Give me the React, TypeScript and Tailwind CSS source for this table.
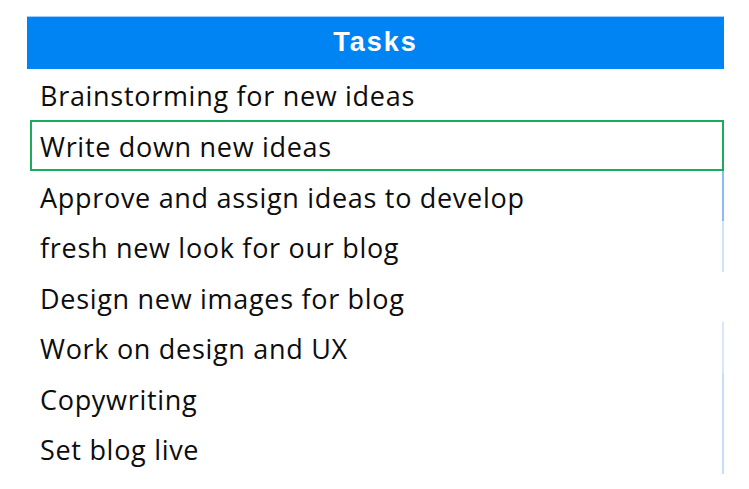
const tasks = [
  "Brainstorming for new ideas",
  "Write down new ideas",
  "Approve and assign ideas to develop",
  "fresh new look for our blog",
  "Design new images for blog",
  "Work on design and UX",
  "Copywriting",
  "Set blog live",
];

// faint table edge visible on the right of some rows
const edges = [
  "border-transparent",
  "border-transparent",
  "border-[#8fb8f5]",
  "border-[#cfe3fb]",
  "border-transparent",
  "border-[#d6e8fc]",
  "border-[#c4defb]",
  "border-[#c4defb]",
];

export default function App() {
  return (
    <div className="w-[749px] h-[489px] bg-white pt-[16px] pl-[27px]">
      <div className="w-[697px]">
        <div className="h-[53px] bg-[#0084f4] border-t border-[#9fcdfb] flex items-center justify-center">
          <span className="text-white font-bold text-[27px] tracking-[2px] font-['Liberation_Sans',Arial,sans-serif] -mt-[2px]">
            Tasks
          </span>
        </div>
        <ul className="pl-[3px] font-['Open_Sans',sans-serif] text-[#0d0d0d]">
          {tasks.map((t, i) =>
            i === 1 ? (
              <li
                key={t}
                className="h-[51px] border-2 border-[#1aab5c] pl-[8px] pt-[4px] flex items-center text-[27px] tracking-[0.7px]"
              >
                {t}
              </li>
            ) : (
              <li
                key={t}
                className={`h-[50.5px] pl-[10px] pt-[4px] flex items-center text-[27px] tracking-[0.7px] border-r-2 ${edges[i]}`}
              >
                {t}
              </li>
            )
          )}
        </ul>
      </div>
    </div>
  );
}
